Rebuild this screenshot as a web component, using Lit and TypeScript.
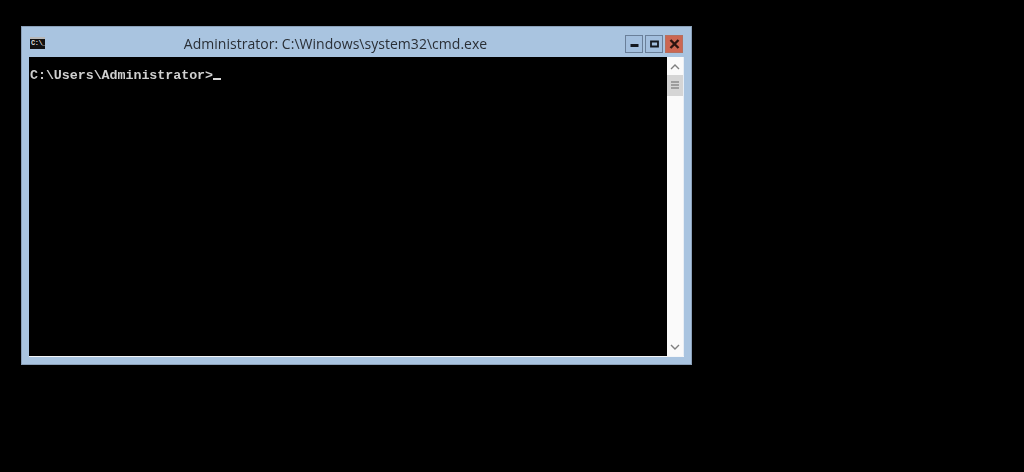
import { LitElement, html, css } from "lit";
import { customElement } from "lit/decorators.js";

@customElement("app-root")
export class AppRoot extends LitElement {
  static styles = css`
    :host { display: block; width: 1024px; height: 472px; background: #000; box-sizing: border-box; padding: 26px 0 0 21px; overflow: hidden; }
    .win { width: 671px; height: 339px; box-sizing: border-box; background: #a9c4e0; display: flex; flex-direction: column; border: 1px solid #8ba0b8; }
    .title { height: 30px; flex: none; display: flex; align-items: center; }
    .icon { width: 15px; height: 12px; margin: 2px 0 0 8px; background: #111; border-top: 2px solid #b9b9b9; box-sizing: border-box; color: #ddd; font: bold 7px/9px "Liberation Mono", monospace; overflow: hidden; padding-left: 1px; letter-spacing: -0.5px; flex: none; }
    .text { flex: 1; text-align: center; font: 14px/20px "Open Sans", sans-serif; color: #2a2f36; margin: 4px 0 0 1px; letter-spacing: 0.03px; filter: blur(0.3px); }
    .btns { display: flex; gap: 2px; margin: 4px 8px 0 0; flex: none; }
    .btn { width: 16px; height: 16px; border: 1px solid #6a7f99; background: #a3bfde; display: flex; align-items: center; justify-content: center; }
    .btn.close { background: #cc6652; border-color: #b5705f; }
    .body { flex: 1; display: flex; margin: 0 7px 7px 7px; border-bottom: 1px solid #f4f6f8; min-height: 0; }
    .term { flex: 1; background: #000; color: #cfcfcf; font: bold 13.33px/16px "Liberation Mono", monospace; padding: 11px 0 0 1px; white-space: pre; letter-spacing: -0.04px; }
    .line { filter: blur(0.35px); }
    .cur { display: inline-block; width: 8px; height: 2px; background: #d8d8d8; vertical-align: baseline; margin-bottom: -1px; }
    .scroll { width: 16px; flex: none; background: #fafafa; display: flex; flex-direction: column; border-right: 1px solid #e8eef5; }
    .arrow { height: 18px; flex: none; display: flex; align-items: center; justify-content: center; }
    .thumb { height: 21px; flex: none; background: #d5d5d5; display: flex; align-items: center; justify-content: center; }
    .track { flex: 1; }
  `;

  render() {
    return html`
      <div class="win">
        <div class="title">
          <div class="icon">C:\\_</div>
          <div class="text">Administrator: C:\\Windows\\system32\\cmd.exe</div>
          <div class="btns">
            <div class="btn"><svg width="11" height="10" viewBox="0 0 11 10"><rect x="1.5" y="5" width="8" height="3" fill="#14181f"/></svg></div>
            <div class="btn"><svg width="11" height="10" viewBox="0 0 11 10"><path d="M2 2.5h7v5h-7z" fill="none" stroke="#14181f" stroke-width="1.8"/></svg></div>
            <div class="btn close"><svg width="11" height="10" viewBox="0 0 11 10"><path d="M1.5 1l8 8M9.5 1l-8 8" stroke="#2b1410" stroke-width="2.4" fill="none"/></svg></div>
          </div>
        </div>
        <div class="body">
          <div class="term"><div class="line">C:\\Users\\Administrator&gt;<span class="cur"></span></div></div>
          <div class="scroll">
            <div class="arrow"><svg width="10" height="7" viewBox="0 0 10 7"><path d="M1 6l4-4 4 4" fill="none" stroke="#7f7f7f" stroke-width="1.4"/></svg></div>
            <div class="thumb"><svg width="8" height="9" viewBox="0 0 8 9"><path d="M0 1h8M0 4h8M0 7h8" stroke="#8a8a8a" stroke-width="1.4"/></svg></div>
            <div class="track"></div>
            <div class="arrow"><svg width="10" height="7" viewBox="0 0 10 7"><path d="M1 1l4 4 4-4" fill="none" stroke="#7f7f7f" stroke-width="1.4"/></svg></div>
          </div>
        </div>
      </div>
    `;
  }
}
